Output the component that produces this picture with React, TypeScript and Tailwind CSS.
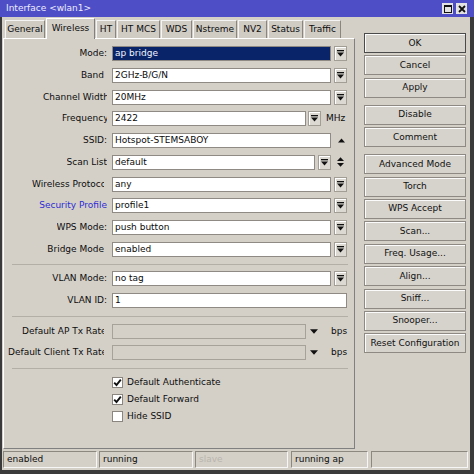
import React from "react";

const DropIcon = () => (
  <svg width="7" height="7" viewBox="0 0 7 7">
    <rect x="0" y="0" width="7" height="1.3" fill="#111" />
    <path d="M0 2.4H7L3.5 6.6Z" fill="#111" />
  </svg>
);

function DropBtn() {
  return (
    <div className="w-[13px] h-[15px] shrink-0 bg-[#dcd9d2] border border-[#a29e96] shadow-[inset_1px_1px_0_#fff] flex items-center justify-center">
      <DropIcon />
    </div>
  );
}

function Input({ value, w, sel, dis }: { value?: string; w: string; sel?: boolean; dis?: boolean }) {
  const bg = dis ? "bg-[#d4d0c8] border-[#a6a29a]" : "bg-white border-[#8f8b84]";
  return (
    <div className={`${w} h-[15px] shrink-0 border ${bg}`}>
      <div
        className={`h-full flex items-center pl-[2px] whitespace-nowrap overflow-hidden ${
          sel ? "bg-[#0a246a] text-[#f0f4ff]" : "text-[#0a0a0a]"
        }`}
      >
        {value}
      </div>
    </div>
  );
}

function Label({ t, clip, mr, blue }: { t: string; clip?: string; mr?: string; blue?: boolean }) {
  return (
    <div className="w-[103px] shrink-0 flex justify-end">
      <span
        className={`block whitespace-nowrap overflow-hidden ${clip ?? ""} ${mr ?? ""} ${
          blue ? "text-[#2d2dd2]" : "text-[#0d0d0d]"
        }`}
      >
        {t}
      </span>
    </div>
  );
}

function Row({ label, children }: { label: React.ReactNode; children: React.ReactNode }) {
  return (
    <div className="flex items-center h-[15px]">
      {label}
      <div className="ml-[5px] flex items-center">{children}</div>
    </div>
  );
}

function Sep({ cls }: { cls: string }) {
  return <div className={`ml-[8px] w-[336px] h-px bg-[#b3afa7] ${cls}`} />;
}

function Btn({ t, def }: { t: string; def?: boolean }) {
  return (
    <div
      className={`h-[20px] w-full flex items-center justify-center border ${
        def ? "border-[#4a4a4a]" : "border-[#8e8a83]"
      } bg-[#d6d3cc] shadow-[inset_1px_1px_0_#fbfbfb] text-[#111]`}
    >
      {t}
    </div>
  );
}

function Check({ on, t }: { on?: boolean; t: string }) {
  return (
    <div className="flex items-center h-[11px]">
      <div className="ml-[108px] w-[11px] h-[11px] bg-white border border-[#8a867f] flex items-center justify-center">
        {on && (
          <svg width="9" height="9" viewBox="0 0 9 9">
            <path d="M1.2 4.6L3.5 7L7.8 1.6" stroke="#111" strokeWidth="1.9" fill="none" />
          </svg>
        )}
      </div>
      <span className="ml-[4px] text-[#0d0d0d] whitespace-nowrap">{t}</span>
    </div>
  );
}

function Tab({ t, w, sel }: { t: string; w: string; sel?: boolean }) {
  if (sel)
    return (
      <div
        className={`${w} h-[21px] mb-[-1px] relative z-10 bg-[#d4d0c8] border-t border-l border-t-white border-l-white border-r border-r-[#808080] flex items-center justify-center text-[#0d0d0d] pb-[2px]`}
      >
        {t}
      </div>
    );
  return (
    <div
      className={`${w} h-[18px] bg-[#d0ccc4] border-t border-l border-t-[#f4f4f4] border-l-[#f4f4f4] border-r border-r-[#8a867f] flex items-center justify-center text-[#0d0d0d] overflow-hidden whitespace-nowrap`}
    >
      {t}
    </div>
  );
}

function Cell({ t, w, dim }: { t: string; w: string; dim?: boolean }) {
  return (
    <div
      className={`${w} h-[17px] border-t border-l border-t-[#8c887f] border-l-[#8c887f] border-b border-r border-b-[#f6f6f6] border-r-[#f6f6f6] flex items-center pl-[3px] ${
        dim ? "text-[#b9b5ad]" : "text-[#0d0d0d]"
      }`}
    >
      {t}
    </div>
  );
}

export default function App() {
  return (
    <div className="w-[474px] h-[474px] overflow-hidden bg-[#d4d0c8] flex flex-col font-['DejaVu_Sans',sans-serif] text-[9px] leading-none">
      {/* Title bar */}
      <div className="h-[17px] shrink-0 bg-[#4e4ec6] flex items-center pl-[6px] pr-[7px]">
        <span className="text-[#ececff]">Interface &lt;wlan1&gt;</span>
        <div className="ml-auto flex gap-[3px]">
          <div className="w-[11px] h-[11px] bg-[#e2e2e2] flex items-center justify-center">
            <div className="w-[8px] h-[8px] border border-[#111] border-t-2" />
          </div>
          <div className="w-[11px] h-[11px] bg-[#e2e2e2] flex items-center justify-center">
            <svg width="8" height="8" viewBox="0 0 8 8">
              <path d="M1 1L7 7M7 1L1 7" stroke="#111" strokeWidth="1.8" />
            </svg>
          </div>
        </div>
      </div>

      {/* Body */}
      <div className="flex-1 flex flex-col border-l-[2px] border-r-[4px] border-b-[4px] border-[#3a3a3a]">
        <div className="flex pl-[1px] pt-[1px]">
          {/* Left: tabs + panel */}
          <div className="w-[352px] flex flex-col">
            <div className="h-[20px] flex items-end gap-[1px] pl-[2px]">
              <Tab t="General" w="w-[40px]" />
              <Tab t="Wireless" w="w-[49px]" sel />
              <Tab t="HT" w="w-[20px]" />
              <Tab t="HT MCS" w="w-[43px]" />
              <Tab t="WDS" w="w-[31px]" />
              <Tab t="Nstreme" w="w-[44px]" />
              <Tab t="NV2" w="w-[29px]" />
              <Tab t="Status" w="w-[35px]" />
              <Tab t="Traffic" w="w-[37px]" />
            </div>
            <div className="h-[411px] border border-t-white border-l-white border-r-[#808080] border-b-[#808080] pt-[7px] flex flex-col">
              <div className="flex flex-col gap-[6.75px]">
                <Row label={<Label t="Mode:" />}>
                  <Input value="ap bridge" w="w-[219px]" sel />
                  <div className="ml-[3px]"><DropBtn /></div>
                </Row>
                <Row label={<Label t="Band" mr="mr-[3px]" />}>
                  <Input value="2GHz-B/G/N" w="w-[219px]" />
                  <div className="ml-[3px]"><DropBtn /></div>
                </Row>
                <Row label={<Label t="Channel Width" clip="w-[64px]" />}>
                  <Input value="20MHz" w="w-[219px]" />
                  <div className="ml-[3px]"><DropBtn /></div>
                </Row>
                <Row label={<Label t="Frequency" clip="w-[45px]" />}>
                  <Input value="2422" w="w-[194px]" />
                  <div className="ml-[2px]"><DropBtn /></div>
                  <span className="ml-[5px] text-[#0d0d0d]">MHz</span>
                </Row>
                <Row label={<Label t="SSID:" />}>
                  <Input value="Hotspot-STEMSABOY" w="w-[219px]" />
                  <svg className="ml-[7px]" width="7" height="5" viewBox="0 0 7 5">
                    <path d="M0 4.5H7L3.5 0.5Z" fill="#111" />
                  </svg>
                </Row>
                <Row label={<Label t="Scan List" />}>
                  <Input value="default" w="w-[203px]" />
                  <div className="ml-[3px]"><DropBtn /></div>
                  <svg className="ml-[6px]" width="7" height="10" viewBox="0 0 7 10">
                    <path d="M0 4H7L3.5 0.3Z" fill="#111" />
                    <path d="M0 6H7L3.5 9.7Z" fill="#111" />
                  </svg>
                </Row>
                <Row label={<Label t="Wireless Protocol" clip="w-[72px]" mr="mr-[3px]" />}>
                  <Input value="any" w="w-[219px]" />
                  <div className="ml-[3px]"><DropBtn /></div>
                </Row>
                <Row label={<Label t="Security Profile" blue />}>
                  <Input value="profile1" w="w-[219px]" />
                  <div className="ml-[3px]"><DropBtn /></div>
                </Row>
                <Row label={<Label t="WPS Mode:" />}>
                  <Input value="push button" w="w-[219px]" />
                  <div className="ml-[3px]"><DropBtn /></div>
                </Row>
                <Row label={<Label t="Bridge Mode" mr="mr-[3px]" />}>
                  <Input value="enabled" w="w-[219px]" />
                  <div className="ml-[3px]"><DropBtn /></div>
                </Row>
              </div>
              <Sep cls="mt-[7px] mb-[6.5px]" />
              <div className="flex flex-col gap-[6.75px]">
                <Row label={<Label t="VLAN Mode:" />}>
                  <Input value="no tag" w="w-[219px]" />
                  <div className="ml-[3px]"><DropBtn /></div>
                </Row>
                <Row label={<Label t="VLAN ID:" />}>
                  <Input value="1" w="w-[235px]" />
                </Row>
              </div>
              <Sep cls="mt-[7.5px] mb-[7px]" />
              <div className="flex flex-col gap-[6.75px]">
                <Row label={<Label t="Default AP Tx Rate" clip="w-[82px]" mr="mr-[3px]" />}>
                  <Input w="w-[194px]" dis />
                  <svg className="ml-[4px]" width="8" height="5" viewBox="0 0 8 5">
                    <path d="M0 0.3H8L4 4.8Z" fill="#111" />
                  </svg>
                  <span className="ml-[13px] text-[#0d0d0d]">bps</span>
                </Row>
                <Row label={<Label t="Default Client Tx Rate" clip="w-[96px]" mr="mr-[3px]" />}>
                  <Input w="w-[194px]" dis />
                  <svg className="ml-[4px]" width="8" height="5" viewBox="0 0 8 5">
                    <path d="M0 0.3H8L4 4.8Z" fill="#111" />
                  </svg>
                  <span className="ml-[13px] text-[#0d0d0d]">bps</span>
                </Row>
              </div>
              <Sep cls="mt-[8px] mb-[8px]" />
              <div className="flex flex-col gap-[6px]">
                <Check on t="Default Authenticate" />
                <Check on t="Default Forward" />
                <Check t="Hide SSID" />
              </div>
            </div>
          </div>

          {/* Right: buttons */}
          <div className="ml-[9px] w-[102px] pt-[15px] flex flex-col">
            <div className="flex flex-col gap-[2.4px]">
              <Btn t="OK" def />
              <Btn t="Cancel" />
              <Btn t="Apply" />
            </div>
            <div className="mt-[7px] flex flex-col gap-[2.4px]">
              <Btn t="Disable" />
              <Btn t="Comment" />
            </div>
            <div className="mt-[7px] flex flex-col gap-[2.4px]">
              <Btn t="Advanced Mode" />
              <Btn t="Torch" />
              <Btn t="WPS Accept" />
              <Btn t="Scan..." />
              <Btn t="Freq. Usage..." />
              <Btn t="Align..." />
              <Btn t="Sniff..." />
              <Btn t="Snooper..." />
              <Btn t="Reset Configuration" />
            </div>
          </div>
        </div>

        {/* Status bar */}
        <div className="mt-[2px] flex pl-[1px]">
          <Cell t="enabled" w="w-[94px]" />
          <div className="ml-[2px]"><Cell t="running" w="w-[94px]" /></div>
          <div className="ml-[2px]"><Cell t="slave" w="w-[93px]" dim /></div>
          <div className="ml-[3px]"><Cell t="running ap" w="w-[77px]" /></div>
          <div className="ml-[3px]"><Cell t="" w="w-[97px]" /></div>
        </div>
      </div>
    </div>
  );
}
